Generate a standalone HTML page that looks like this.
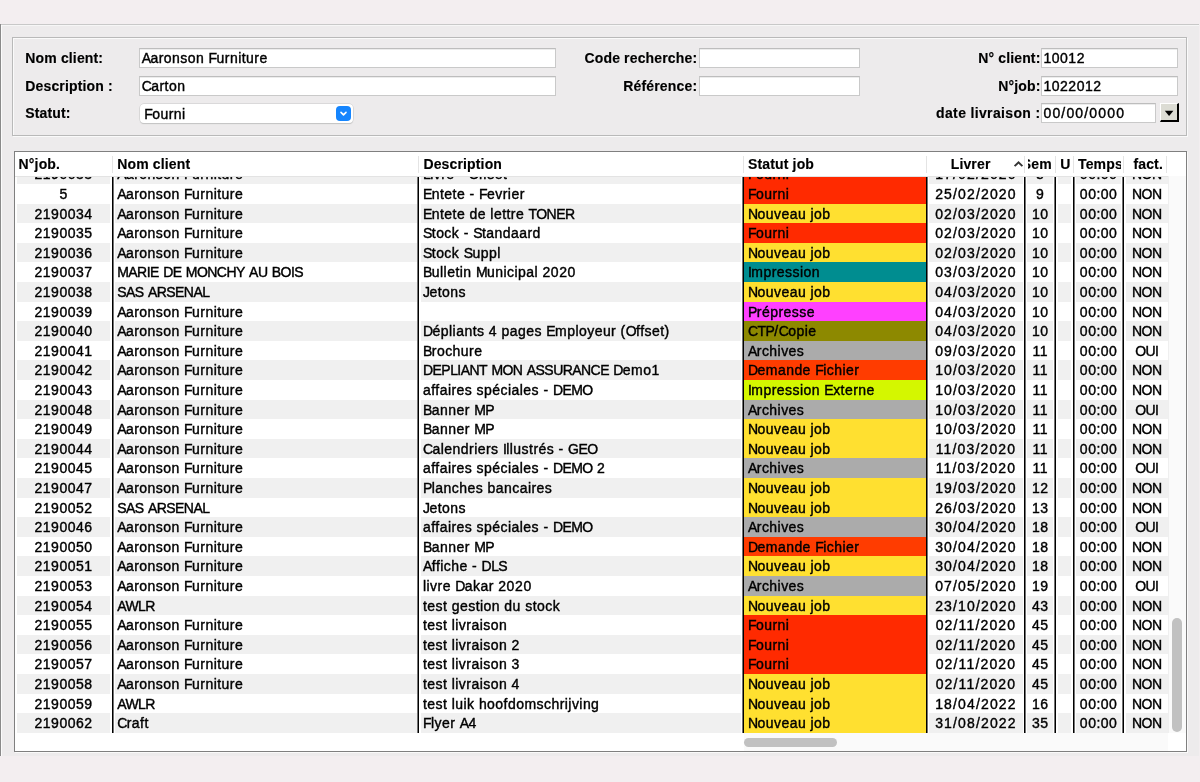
<!DOCTYPE html>
<html><head><meta charset="utf-8"><title>Jobs</title>
<style>
#wrap{position:absolute;left:0;top:0;width:1200px;height:782px;will-change:transform}
*{box-sizing:border-box}
html,body{margin:0;padding:0}
body{width:1200px;height:782px;background:#f3eef0;position:relative;overflow:hidden;font-family:"Liberation Sans",sans-serif;font-size:14px;color:#000}
.a{position:absolute}
.t{position:absolute;line-height:16px;white-space:nowrap;letter-spacing:0.3px;-webkit-text-stroke:0.4px #000}
.n{letter-spacing:0.5px}
.d{letter-spacing:1.15px}
.b{font-weight:bold;letter-spacing:0.15px;-webkit-text-stroke:0.15px #000}
.r{text-align:right}
.c{text-align:center}
.inp{position:absolute;background:#fff;border:1px solid #c9c9c9;border-top-color:#bdbdbd;box-shadow:inset 0 1px 0 #ececec}
.dv{position:absolute;width:1.5px;background:#111}
.hs{position:absolute;width:1px;background:#e4e4e4;top:156px;height:17px}
</style></head><body><div id="wrap">

<div class="a" style="left:0;top:24px;width:1199px;height:732px;background:#edebec"></div>
<div class="a" style="left:0;top:24px;width:1199px;height:1px;background:#c8c8c8"></div>
<div class="a" style="left:1px;top:25px;width:1198px;height:1px;background:#f6f6f6"></div>
<div class="a" style="left:0;top:24px;width:1px;height:732px;background:#8a8a8a"></div>
<div class="a" style="left:1px;top:25px;width:1px;height:731px;background:#fbfbfb"></div>
<div class="a" style="left:12px;top:37px;width:1175px;height:99px;border:1px solid #b9b9b9;box-shadow:inset 1px 1px 0 #fafafa, 1px 1px 0 #fafafa"></div>
<div class="t b" style="left:25.3px;top:50.15px;">Nom client:</div>
<div class="t b" style="left:25.3px;top:78.45px;">Description :</div>
<div class="t b" style="left:25.3px;top:105.15px;">Statut:</div>
<div class="t b r" style="right:502.8px;top:50.15px;">Code recherche:</div>
<div class="t b r" style="right:502.8px;top:78.45px;">Référence:</div>
<div class="t b r" style="right:159.5px;top:50.15px;">N° client:</div>
<div class="t b r" style="right:159.5px;top:78.45px;">N°job:</div>
<div class="t b r" style="right:159.5px;top:105.15px;letter-spacing:0.35px">date livraison :</div>
<div class="inp" style="left:139px;top:47.5px;width:417px;height:20px"></div>
<div class="inp" style="left:139px;top:75.5px;width:417px;height:20px"></div>
<div class="inp" style="left:699px;top:47.5px;width:161px;height:20px"></div>
<div class="inp" style="left:699px;top:75.5px;width:161px;height:20px"></div>
<div class="inp" style="left:1041px;top:47.5px;width:137px;height:20px"></div>
<div class="inp" style="left:1041px;top:75.5px;width:137px;height:20px"></div>
<div class="inp" style="left:1041px;top:102.5px;width:115px;height:20px"></div>
<div class="t " style="left:141.7px;top:49.95px;"><span style="letter-spacing:-0.55px">A</span><span style="letter-spacing:0.45px">aronson</span><span style="letter-spacing:0.45px"> </span><span style="letter-spacing:-0.55px">F</span><span style="letter-spacing:0.45px">urniture</span></div>
<div class="t " style="left:141.7px;top:78.15px;"><span style="letter-spacing:-0.55px">C</span><span style="letter-spacing:0.45px">arton</span></div>
<div class="t n" style="left:1043.5px;top:49.95px;">10012</div>
<div class="t n" style="left:1043.5px;top:78.15px;">1022012</div>
<div class="t d" style="left:1043.5px;top:105.15px;">00/00/0000</div>
<div class="a" style="left:140px;top:103.5px;width:212.5px;height:19.5px;background:#fff;border-radius:4px;box-shadow:0 0 0 0.5px #c8c8c8, 0 1px 1px #c0c0c0"></div>
<div class="a" style="left:336px;top:105.5px;width:15px;height:15px;background:#1585fe;border-radius:4px"></div>
<svg class="a" style="left:336px;top:105.5px" width="15" height="15" viewBox="0 0 15 15"><path d="M5 6.4 L7.5 8.9 L10 6.4" fill="none" stroke="#fff" stroke-width="1.6" stroke-linecap="round" stroke-linejoin="round"/></svg>
<div class="t " style="left:144.2px;top:106.15px;"><span style="letter-spacing:-0.55px">F</span><span style="letter-spacing:0.45px">ourni</span></div>
<div class="a" style="left:1160px;top:103px;width:19px;height:19px;background:#dcdcd4;border-top:1px solid #fff;border-left:1px solid #fff;border-right:2px solid #000;border-bottom:2px solid #000"></div>
<svg class="a" style="left:1160px;top:103px" width="19" height="19" viewBox="0 0 19 19"><path d="M4.8 7.8 L13.4 7.8 L9.1 13 Z" fill="#000"/></svg>
<div class="a" style="left:14px;top:151px;width:1173px;height:601px;background:#fff;border:1px solid #7f7f7f;box-shadow:1px 1px 0 #fafafa"></div>
<div class="a" style="left:15px;top:176px;width:1171px;height:556.8px;overflow:hidden">
<div class="a" style="left:2px;top:-11.6px;width:93px;height:19.6px;background:#f0f0f0"></div>
<div class="t c n" style="left:-51.45px;top:-9.55px;width:200px">2190033</div>
<div class="a" style="left:100px;top:-11.6px;width:301.5px;height:19.6px;background:#f0f0f0"></div>
<div class="t" style="left:102.2px;top:-9.55px"><span style="letter-spacing:-0.55px">A</span><span style="letter-spacing:0.45px">aronson</span><span style="letter-spacing:0.45px"> </span><span style="letter-spacing:-0.55px">F</span><span style="letter-spacing:0.45px">urniture</span></div>
<div class="a" style="left:406px;top:-11.6px;width:319.8px;height:19.6px;background:#f0f0f0"></div>
<div class="t" style="left:408px;top:-9.55px"><span style="letter-spacing:-0.55px">L</span><span style="letter-spacing:0.45px">ivre</span><span style="letter-spacing:0.45px"> </span><span style="letter-spacing:0.5px">-</span><span style="letter-spacing:0.45px"> </span><span style="letter-spacing:-0.55px">O</span><span style="letter-spacing:0.45px">ffset</span></div>
<div class="a" style="left:729.2px;top:-11.6px;width:181.8px;height:19.6px;background:#ff2a00"></div>
<div class="t" style="left:733px;top:-9.55px"><span style="letter-spacing:-0.55px">F</span><span style="letter-spacing:0.45px">ourni</span></div>
<div class="a" style="left:913.8px;top:-11.6px;width:93.8px;height:19.6px;background:#f0f0f0"></div>
<div class="t c d" style="left:860.95px;top:-9.55px;width:200px">17/02/2020</div>
<div class="a" style="left:1012.2px;top:-11.6px;width:25.7px;height:19.6px;background:#f0f0f0"></div>
<div class="t c n" style="left:925.25px;top:-9.55px;width:200px">8</div>
<div class="a" style="left:1042.9px;top:-11.6px;width:13.4px;height:19.6px;background:#f0f0f0"></div>
<div class="a" style="left:1061.3px;top:-11.6px;width:44.4px;height:19.6px;background:#f0f0f0"></div>
<div class="t c n" style="left:983.65px;top:-9.55px;width:200px">00:00</div>
<div class="a" style="left:1110.5px;top:-11.6px;width:42px;height:19.6px;background:#f0f0f0"></div>
<div class="t c" style="left:1031.75px;top:-9.55px;width:200px"><span style="letter-spacing:-0.55px">NON</span></div>
<div class="t c n" style="left:-51.45px;top:10.05px;width:200px">5</div>
<div class="t" style="left:102.2px;top:10.05px"><span style="letter-spacing:-0.55px">A</span><span style="letter-spacing:0.45px">aronson</span><span style="letter-spacing:0.45px"> </span><span style="letter-spacing:-0.55px">F</span><span style="letter-spacing:0.45px">urniture</span></div>
<div class="t" style="left:408px;top:10.05px"><span style="letter-spacing:-0.55px">E</span><span style="letter-spacing:0.45px">ntete</span><span style="letter-spacing:0.45px"> </span><span style="letter-spacing:0.5px">-</span><span style="letter-spacing:0.45px"> </span><span style="letter-spacing:-0.55px">F</span><span style="letter-spacing:0.45px">evrier</span></div>
<div class="a" style="left:729.2px;top:8px;width:181.8px;height:19.6px;background:#ff2a00"></div>
<div class="t" style="left:733px;top:10.05px"><span style="letter-spacing:-0.55px">F</span><span style="letter-spacing:0.45px">ourni</span></div>
<div class="t c d" style="left:860.95px;top:10.05px;width:200px">25/02/2020</div>
<div class="t c n" style="left:925.25px;top:10.05px;width:200px">9</div>
<div class="t c n" style="left:983.65px;top:10.05px;width:200px">00:00</div>
<div class="t c" style="left:1031.75px;top:10.05px;width:200px"><span style="letter-spacing:-0.55px">NON</span></div>
<div class="a" style="left:2px;top:27.6px;width:93px;height:19.6px;background:#f0f0f0"></div>
<div class="t c n" style="left:-51.45px;top:29.65px;width:200px">2190034</div>
<div class="a" style="left:100px;top:27.6px;width:301.5px;height:19.6px;background:#f0f0f0"></div>
<div class="t" style="left:102.2px;top:29.65px"><span style="letter-spacing:-0.55px">A</span><span style="letter-spacing:0.45px">aronson</span><span style="letter-spacing:0.45px"> </span><span style="letter-spacing:-0.55px">F</span><span style="letter-spacing:0.45px">urniture</span></div>
<div class="a" style="left:406px;top:27.6px;width:319.8px;height:19.6px;background:#f0f0f0"></div>
<div class="t" style="left:408px;top:29.65px"><span style="letter-spacing:-0.55px">E</span><span style="letter-spacing:0.45px">ntete</span><span style="letter-spacing:0.45px"> </span><span style="letter-spacing:0.45px">de</span><span style="letter-spacing:0.45px"> </span><span style="letter-spacing:0.45px">lettre</span><span style="letter-spacing:0.45px"> </span><span style="letter-spacing:-0.55px">TONER</span></div>
<div class="a" style="left:729.2px;top:27.6px;width:181.8px;height:19.6px;background:#ffe030"></div>
<div class="t" style="left:733px;top:29.65px"><span style="letter-spacing:-0.55px">N</span><span style="letter-spacing:0.45px">ouveau</span><span style="letter-spacing:0.45px"> </span><span style="letter-spacing:0.45px">job</span></div>
<div class="a" style="left:913.8px;top:27.6px;width:93.8px;height:19.6px;background:#f0f0f0"></div>
<div class="t c d" style="left:860.95px;top:29.65px;width:200px">02/03/2020</div>
<div class="a" style="left:1012.2px;top:27.6px;width:25.7px;height:19.6px;background:#f0f0f0"></div>
<div class="t c n" style="left:925.25px;top:29.65px;width:200px">10</div>
<div class="a" style="left:1042.9px;top:27.6px;width:13.4px;height:19.6px;background:#f0f0f0"></div>
<div class="a" style="left:1061.3px;top:27.6px;width:44.4px;height:19.6px;background:#f0f0f0"></div>
<div class="t c n" style="left:983.65px;top:29.65px;width:200px">00:00</div>
<div class="a" style="left:1110.5px;top:27.6px;width:42px;height:19.6px;background:#f0f0f0"></div>
<div class="t c" style="left:1031.75px;top:29.65px;width:200px"><span style="letter-spacing:-0.55px">NON</span></div>
<div class="t c n" style="left:-51.45px;top:49.25px;width:200px">2190035</div>
<div class="t" style="left:102.2px;top:49.25px"><span style="letter-spacing:-0.55px">A</span><span style="letter-spacing:0.45px">aronson</span><span style="letter-spacing:0.45px"> </span><span style="letter-spacing:-0.55px">F</span><span style="letter-spacing:0.45px">urniture</span></div>
<div class="t" style="left:408px;top:49.25px"><span style="letter-spacing:-0.55px">S</span><span style="letter-spacing:0.45px">tock</span><span style="letter-spacing:0.45px"> </span><span style="letter-spacing:0.5px">-</span><span style="letter-spacing:0.45px"> </span><span style="letter-spacing:-0.55px">S</span><span style="letter-spacing:0.45px">tandaard</span></div>
<div class="a" style="left:729.2px;top:47.2px;width:181.8px;height:19.6px;background:#ff2a00"></div>
<div class="t" style="left:733px;top:49.25px"><span style="letter-spacing:-0.55px">F</span><span style="letter-spacing:0.45px">ourni</span></div>
<div class="t c d" style="left:860.95px;top:49.25px;width:200px">02/03/2020</div>
<div class="t c n" style="left:925.25px;top:49.25px;width:200px">10</div>
<div class="t c n" style="left:983.65px;top:49.25px;width:200px">00:00</div>
<div class="t c" style="left:1031.75px;top:49.25px;width:200px"><span style="letter-spacing:-0.55px">NON</span></div>
<div class="a" style="left:2px;top:66.8px;width:93px;height:19.6px;background:#f0f0f0"></div>
<div class="t c n" style="left:-51.45px;top:68.85px;width:200px">2190036</div>
<div class="a" style="left:100px;top:66.8px;width:301.5px;height:19.6px;background:#f0f0f0"></div>
<div class="t" style="left:102.2px;top:68.85px"><span style="letter-spacing:-0.55px">A</span><span style="letter-spacing:0.45px">aronson</span><span style="letter-spacing:0.45px"> </span><span style="letter-spacing:-0.55px">F</span><span style="letter-spacing:0.45px">urniture</span></div>
<div class="a" style="left:406px;top:66.8px;width:319.8px;height:19.6px;background:#f0f0f0"></div>
<div class="t" style="left:408px;top:68.85px"><span style="letter-spacing:-0.55px">S</span><span style="letter-spacing:0.45px">tock</span><span style="letter-spacing:0.45px"> </span><span style="letter-spacing:-0.55px">S</span><span style="letter-spacing:0.45px">uppl</span></div>
<div class="a" style="left:729.2px;top:66.8px;width:181.8px;height:19.6px;background:#ffe030"></div>
<div class="t" style="left:733px;top:68.85px"><span style="letter-spacing:-0.55px">N</span><span style="letter-spacing:0.45px">ouveau</span><span style="letter-spacing:0.45px"> </span><span style="letter-spacing:0.45px">job</span></div>
<div class="a" style="left:913.8px;top:66.8px;width:93.8px;height:19.6px;background:#f0f0f0"></div>
<div class="t c d" style="left:860.95px;top:68.85px;width:200px">02/03/2020</div>
<div class="a" style="left:1012.2px;top:66.8px;width:25.7px;height:19.6px;background:#f0f0f0"></div>
<div class="t c n" style="left:925.25px;top:68.85px;width:200px">10</div>
<div class="a" style="left:1042.9px;top:66.8px;width:13.4px;height:19.6px;background:#f0f0f0"></div>
<div class="a" style="left:1061.3px;top:66.8px;width:44.4px;height:19.6px;background:#f0f0f0"></div>
<div class="t c n" style="left:983.65px;top:68.85px;width:200px">00:00</div>
<div class="a" style="left:1110.5px;top:66.8px;width:42px;height:19.6px;background:#f0f0f0"></div>
<div class="t c" style="left:1031.75px;top:68.85px;width:200px"><span style="letter-spacing:-0.55px">NON</span></div>
<div class="t c n" style="left:-51.45px;top:88.45px;width:200px">2190037</div>
<div class="t" style="left:102.2px;top:88.45px"><span style="letter-spacing:-0.55px">MARIE</span><span style="letter-spacing:0.45px"> </span><span style="letter-spacing:-0.55px">DE</span><span style="letter-spacing:0.45px"> </span><span style="letter-spacing:-0.55px">MONCHY</span><span style="letter-spacing:0.45px"> </span><span style="letter-spacing:-0.55px">AU</span><span style="letter-spacing:0.45px"> </span><span style="letter-spacing:-0.55px">BOIS</span></div>
<div class="t" style="left:408px;top:88.45px"><span style="letter-spacing:-0.55px">B</span><span style="letter-spacing:0.45px">ulletin</span><span style="letter-spacing:0.45px"> </span><span style="letter-spacing:-0.55px">M</span><span style="letter-spacing:0.45px">unicipal</span><span style="letter-spacing:0.45px"> </span><span style="letter-spacing:0.6px">2020</span></div>
<div class="a" style="left:729.2px;top:86.4px;width:181.8px;height:19.6px;background:#008d90"></div>
<div class="t" style="left:733px;top:88.45px"><span style="letter-spacing:-0.55px">I</span><span style="letter-spacing:0.45px">mpression</span></div>
<div class="t c d" style="left:860.95px;top:88.45px;width:200px">03/03/2020</div>
<div class="t c n" style="left:925.25px;top:88.45px;width:200px">10</div>
<div class="t c n" style="left:983.65px;top:88.45px;width:200px">00:00</div>
<div class="t c" style="left:1031.75px;top:88.45px;width:200px"><span style="letter-spacing:-0.55px">NON</span></div>
<div class="a" style="left:2px;top:106px;width:93px;height:19.6px;background:#f0f0f0"></div>
<div class="t c n" style="left:-51.45px;top:108.05px;width:200px">2190038</div>
<div class="a" style="left:100px;top:106px;width:301.5px;height:19.6px;background:#f0f0f0"></div>
<div class="t" style="left:102.2px;top:108.05px"><span style="letter-spacing:-0.55px">SAS</span><span style="letter-spacing:0.45px"> </span><span style="letter-spacing:-0.55px">ARSENAL</span></div>
<div class="a" style="left:406px;top:106px;width:319.8px;height:19.6px;background:#f0f0f0"></div>
<div class="t" style="left:408px;top:108.05px"><span style="letter-spacing:-0.55px">J</span><span style="letter-spacing:0.45px">etons</span></div>
<div class="a" style="left:729.2px;top:106px;width:181.8px;height:19.6px;background:#ffe030"></div>
<div class="t" style="left:733px;top:108.05px"><span style="letter-spacing:-0.55px">N</span><span style="letter-spacing:0.45px">ouveau</span><span style="letter-spacing:0.45px"> </span><span style="letter-spacing:0.45px">job</span></div>
<div class="a" style="left:913.8px;top:106px;width:93.8px;height:19.6px;background:#f0f0f0"></div>
<div class="t c d" style="left:860.95px;top:108.05px;width:200px">04/03/2020</div>
<div class="a" style="left:1012.2px;top:106px;width:25.7px;height:19.6px;background:#f0f0f0"></div>
<div class="t c n" style="left:925.25px;top:108.05px;width:200px">10</div>
<div class="a" style="left:1042.9px;top:106px;width:13.4px;height:19.6px;background:#f0f0f0"></div>
<div class="a" style="left:1061.3px;top:106px;width:44.4px;height:19.6px;background:#f0f0f0"></div>
<div class="t c n" style="left:983.65px;top:108.05px;width:200px">00:00</div>
<div class="a" style="left:1110.5px;top:106px;width:42px;height:19.6px;background:#f0f0f0"></div>
<div class="t c" style="left:1031.75px;top:108.05px;width:200px"><span style="letter-spacing:-0.55px">NON</span></div>
<div class="t c n" style="left:-51.45px;top:127.65px;width:200px">2190039</div>
<div class="t" style="left:102.2px;top:127.65px"><span style="letter-spacing:-0.55px">A</span><span style="letter-spacing:0.45px">aronson</span><span style="letter-spacing:0.45px"> </span><span style="letter-spacing:-0.55px">F</span><span style="letter-spacing:0.45px">urniture</span></div>
<div class="a" style="left:729.2px;top:125.6px;width:181.8px;height:19.6px;background:#ff40ff"></div>
<div class="t" style="left:733px;top:127.65px"><span style="letter-spacing:-0.55px">P</span><span style="letter-spacing:0.45px">répresse</span></div>
<div class="t c d" style="left:860.95px;top:127.65px;width:200px">04/03/2020</div>
<div class="t c n" style="left:925.25px;top:127.65px;width:200px">10</div>
<div class="t c n" style="left:983.65px;top:127.65px;width:200px">00:00</div>
<div class="t c" style="left:1031.75px;top:127.65px;width:200px"><span style="letter-spacing:-0.55px">NON</span></div>
<div class="a" style="left:2px;top:145.2px;width:93px;height:19.6px;background:#f0f0f0"></div>
<div class="t c n" style="left:-51.45px;top:147.25px;width:200px">2190040</div>
<div class="a" style="left:100px;top:145.2px;width:301.5px;height:19.6px;background:#f0f0f0"></div>
<div class="t" style="left:102.2px;top:147.25px"><span style="letter-spacing:-0.55px">A</span><span style="letter-spacing:0.45px">aronson</span><span style="letter-spacing:0.45px"> </span><span style="letter-spacing:-0.55px">F</span><span style="letter-spacing:0.45px">urniture</span></div>
<div class="a" style="left:406px;top:145.2px;width:319.8px;height:19.6px;background:#f0f0f0"></div>
<div class="t" style="left:408px;top:147.25px"><span style="letter-spacing:-0.55px">D</span><span style="letter-spacing:0.45px">épliants</span><span style="letter-spacing:0.45px"> </span><span style="letter-spacing:0.6px">4</span><span style="letter-spacing:0.45px"> </span><span style="letter-spacing:0.45px">pages</span><span style="letter-spacing:0.45px"> </span><span style="letter-spacing:-0.55px">E</span><span style="letter-spacing:0.45px">mployeur</span><span style="letter-spacing:0.45px"> </span><span style="letter-spacing:0.5px">(</span><span style="letter-spacing:-0.55px">O</span><span style="letter-spacing:0.45px">ffset</span><span style="letter-spacing:0.5px">)</span></div>
<div class="a" style="left:729.2px;top:145.2px;width:181.8px;height:19.6px;background:#8d8900"></div>
<div class="t" style="left:733px;top:147.25px"><span style="letter-spacing:-0.55px">CTP</span><span style="letter-spacing:0.5px">/</span><span style="letter-spacing:-0.55px">C</span><span style="letter-spacing:0.45px">opie</span></div>
<div class="a" style="left:913.8px;top:145.2px;width:93.8px;height:19.6px;background:#f0f0f0"></div>
<div class="t c d" style="left:860.95px;top:147.25px;width:200px">04/03/2020</div>
<div class="a" style="left:1012.2px;top:145.2px;width:25.7px;height:19.6px;background:#f0f0f0"></div>
<div class="t c n" style="left:925.25px;top:147.25px;width:200px">10</div>
<div class="a" style="left:1042.9px;top:145.2px;width:13.4px;height:19.6px;background:#f0f0f0"></div>
<div class="a" style="left:1061.3px;top:145.2px;width:44.4px;height:19.6px;background:#f0f0f0"></div>
<div class="t c n" style="left:983.65px;top:147.25px;width:200px">00:00</div>
<div class="a" style="left:1110.5px;top:145.2px;width:42px;height:19.6px;background:#f0f0f0"></div>
<div class="t c" style="left:1031.75px;top:147.25px;width:200px"><span style="letter-spacing:-0.55px">NON</span></div>
<div class="t c n" style="left:-51.45px;top:166.85px;width:200px">2190041</div>
<div class="t" style="left:102.2px;top:166.85px"><span style="letter-spacing:-0.55px">A</span><span style="letter-spacing:0.45px">aronson</span><span style="letter-spacing:0.45px"> </span><span style="letter-spacing:-0.55px">F</span><span style="letter-spacing:0.45px">urniture</span></div>
<div class="t" style="left:408px;top:166.85px"><span style="letter-spacing:-0.55px">B</span><span style="letter-spacing:0.45px">rochure</span></div>
<div class="a" style="left:729.2px;top:164.8px;width:181.8px;height:19.6px;background:#ababab"></div>
<div class="t" style="left:733px;top:166.85px"><span style="letter-spacing:-0.55px">A</span><span style="letter-spacing:0.45px">rchives</span></div>
<div class="t c d" style="left:860.95px;top:166.85px;width:200px">09/03/2020</div>
<div class="t c n" style="left:925.25px;top:166.85px;width:200px">11</div>
<div class="t c n" style="left:983.65px;top:166.85px;width:200px">00:00</div>
<div class="t c" style="left:1031.75px;top:166.85px;width:200px"><span style="letter-spacing:-0.55px">OUI</span></div>
<div class="a" style="left:2px;top:184.4px;width:93px;height:19.6px;background:#f0f0f0"></div>
<div class="t c n" style="left:-51.45px;top:186.45px;width:200px">2190042</div>
<div class="a" style="left:100px;top:184.4px;width:301.5px;height:19.6px;background:#f0f0f0"></div>
<div class="t" style="left:102.2px;top:186.45px"><span style="letter-spacing:-0.55px">A</span><span style="letter-spacing:0.45px">aronson</span><span style="letter-spacing:0.45px"> </span><span style="letter-spacing:-0.55px">F</span><span style="letter-spacing:0.45px">urniture</span></div>
<div class="a" style="left:406px;top:184.4px;width:319.8px;height:19.6px;background:#f0f0f0"></div>
<div class="t" style="left:408px;top:186.45px"><span style="letter-spacing:-0.55px">DEPLIANT</span><span style="letter-spacing:0.45px"> </span><span style="letter-spacing:-0.55px">MON</span><span style="letter-spacing:0.45px"> </span><span style="letter-spacing:-0.55px">ASSURANCE</span><span style="letter-spacing:0.45px"> </span><span style="letter-spacing:-0.55px">D</span><span style="letter-spacing:0.45px">emo</span><span style="letter-spacing:0.6px">1</span></div>
<div class="a" style="left:729.2px;top:184.4px;width:181.8px;height:19.6px;background:#ff3c00"></div>
<div class="t" style="left:733px;top:186.45px"><span style="letter-spacing:-0.55px">D</span><span style="letter-spacing:0.45px">emande</span><span style="letter-spacing:0.45px"> </span><span style="letter-spacing:-0.55px">F</span><span style="letter-spacing:0.45px">ichier</span></div>
<div class="a" style="left:913.8px;top:184.4px;width:93.8px;height:19.6px;background:#f0f0f0"></div>
<div class="t c d" style="left:860.95px;top:186.45px;width:200px">10/03/2020</div>
<div class="a" style="left:1012.2px;top:184.4px;width:25.7px;height:19.6px;background:#f0f0f0"></div>
<div class="t c n" style="left:925.25px;top:186.45px;width:200px">11</div>
<div class="a" style="left:1042.9px;top:184.4px;width:13.4px;height:19.6px;background:#f0f0f0"></div>
<div class="a" style="left:1061.3px;top:184.4px;width:44.4px;height:19.6px;background:#f0f0f0"></div>
<div class="t c n" style="left:983.65px;top:186.45px;width:200px">00:00</div>
<div class="a" style="left:1110.5px;top:184.4px;width:42px;height:19.6px;background:#f0f0f0"></div>
<div class="t c" style="left:1031.75px;top:186.45px;width:200px"><span style="letter-spacing:-0.55px">NON</span></div>
<div class="t c n" style="left:-51.45px;top:206.05px;width:200px">2190043</div>
<div class="t" style="left:102.2px;top:206.05px"><span style="letter-spacing:-0.55px">A</span><span style="letter-spacing:0.45px">aronson</span><span style="letter-spacing:0.45px"> </span><span style="letter-spacing:-0.55px">F</span><span style="letter-spacing:0.45px">urniture</span></div>
<div class="t" style="left:408px;top:206.05px"><span style="letter-spacing:0.45px">affaires</span><span style="letter-spacing:0.45px"> </span><span style="letter-spacing:0.45px">spéciales</span><span style="letter-spacing:0.45px"> </span><span style="letter-spacing:0.5px">-</span><span style="letter-spacing:0.45px"> </span><span style="letter-spacing:-0.55px">DEMO</span></div>
<div class="a" style="left:729.2px;top:204px;width:181.8px;height:19.6px;background:#d4f700"></div>
<div class="t" style="left:733px;top:206.05px"><span style="letter-spacing:-0.55px">I</span><span style="letter-spacing:0.45px">mpression</span><span style="letter-spacing:0.45px"> </span><span style="letter-spacing:-0.55px">E</span><span style="letter-spacing:0.45px">xterne</span></div>
<div class="t c d" style="left:860.95px;top:206.05px;width:200px">10/03/2020</div>
<div class="t c n" style="left:925.25px;top:206.05px;width:200px">11</div>
<div class="t c n" style="left:983.65px;top:206.05px;width:200px">00:00</div>
<div class="t c" style="left:1031.75px;top:206.05px;width:200px"><span style="letter-spacing:-0.55px">NON</span></div>
<div class="a" style="left:2px;top:223.6px;width:93px;height:19.6px;background:#f0f0f0"></div>
<div class="t c n" style="left:-51.45px;top:225.65px;width:200px">2190048</div>
<div class="a" style="left:100px;top:223.6px;width:301.5px;height:19.6px;background:#f0f0f0"></div>
<div class="t" style="left:102.2px;top:225.65px"><span style="letter-spacing:-0.55px">A</span><span style="letter-spacing:0.45px">aronson</span><span style="letter-spacing:0.45px"> </span><span style="letter-spacing:-0.55px">F</span><span style="letter-spacing:0.45px">urniture</span></div>
<div class="a" style="left:406px;top:223.6px;width:319.8px;height:19.6px;background:#f0f0f0"></div>
<div class="t" style="left:408px;top:225.65px"><span style="letter-spacing:-0.55px">B</span><span style="letter-spacing:0.45px">anner</span><span style="letter-spacing:0.45px"> </span><span style="letter-spacing:-0.55px">MP</span></div>
<div class="a" style="left:729.2px;top:223.6px;width:181.8px;height:19.6px;background:#ababab"></div>
<div class="t" style="left:733px;top:225.65px"><span style="letter-spacing:-0.55px">A</span><span style="letter-spacing:0.45px">rchives</span></div>
<div class="a" style="left:913.8px;top:223.6px;width:93.8px;height:19.6px;background:#f0f0f0"></div>
<div class="t c d" style="left:860.95px;top:225.65px;width:200px">10/03/2020</div>
<div class="a" style="left:1012.2px;top:223.6px;width:25.7px;height:19.6px;background:#f0f0f0"></div>
<div class="t c n" style="left:925.25px;top:225.65px;width:200px">11</div>
<div class="a" style="left:1042.9px;top:223.6px;width:13.4px;height:19.6px;background:#f0f0f0"></div>
<div class="a" style="left:1061.3px;top:223.6px;width:44.4px;height:19.6px;background:#f0f0f0"></div>
<div class="t c n" style="left:983.65px;top:225.65px;width:200px">00:00</div>
<div class="a" style="left:1110.5px;top:223.6px;width:42px;height:19.6px;background:#f0f0f0"></div>
<div class="t c" style="left:1031.75px;top:225.65px;width:200px"><span style="letter-spacing:-0.55px">OUI</span></div>
<div class="t c n" style="left:-51.45px;top:245.25px;width:200px">2190049</div>
<div class="t" style="left:102.2px;top:245.25px"><span style="letter-spacing:-0.55px">A</span><span style="letter-spacing:0.45px">aronson</span><span style="letter-spacing:0.45px"> </span><span style="letter-spacing:-0.55px">F</span><span style="letter-spacing:0.45px">urniture</span></div>
<div class="t" style="left:408px;top:245.25px"><span style="letter-spacing:-0.55px">B</span><span style="letter-spacing:0.45px">anner</span><span style="letter-spacing:0.45px"> </span><span style="letter-spacing:-0.55px">MP</span></div>
<div class="a" style="left:729.2px;top:243.2px;width:181.8px;height:19.6px;background:#ffe030"></div>
<div class="t" style="left:733px;top:245.25px"><span style="letter-spacing:-0.55px">N</span><span style="letter-spacing:0.45px">ouveau</span><span style="letter-spacing:0.45px"> </span><span style="letter-spacing:0.45px">job</span></div>
<div class="t c d" style="left:860.95px;top:245.25px;width:200px">10/03/2020</div>
<div class="t c n" style="left:925.25px;top:245.25px;width:200px">11</div>
<div class="t c n" style="left:983.65px;top:245.25px;width:200px">00:00</div>
<div class="t c" style="left:1031.75px;top:245.25px;width:200px"><span style="letter-spacing:-0.55px">NON</span></div>
<div class="a" style="left:2px;top:262.8px;width:93px;height:19.6px;background:#f0f0f0"></div>
<div class="t c n" style="left:-51.45px;top:264.85px;width:200px">2190044</div>
<div class="a" style="left:100px;top:262.8px;width:301.5px;height:19.6px;background:#f0f0f0"></div>
<div class="t" style="left:102.2px;top:264.85px"><span style="letter-spacing:-0.55px">A</span><span style="letter-spacing:0.45px">aronson</span><span style="letter-spacing:0.45px"> </span><span style="letter-spacing:-0.55px">F</span><span style="letter-spacing:0.45px">urniture</span></div>
<div class="a" style="left:406px;top:262.8px;width:319.8px;height:19.6px;background:#f0f0f0"></div>
<div class="t" style="left:408px;top:264.85px"><span style="letter-spacing:-0.55px">C</span><span style="letter-spacing:0.45px">alendriers</span><span style="letter-spacing:0.45px"> </span><span style="letter-spacing:-0.55px">I</span><span style="letter-spacing:0.45px">llustrés</span><span style="letter-spacing:0.45px"> </span><span style="letter-spacing:0.5px">-</span><span style="letter-spacing:0.45px"> </span><span style="letter-spacing:-0.55px">GEO</span></div>
<div class="a" style="left:729.2px;top:262.8px;width:181.8px;height:19.6px;background:#ffe030"></div>
<div class="t" style="left:733px;top:264.85px"><span style="letter-spacing:-0.55px">N</span><span style="letter-spacing:0.45px">ouveau</span><span style="letter-spacing:0.45px"> </span><span style="letter-spacing:0.45px">job</span></div>
<div class="a" style="left:913.8px;top:262.8px;width:93.8px;height:19.6px;background:#f0f0f0"></div>
<div class="t c d" style="left:860.95px;top:264.85px;width:200px">11/03/2020</div>
<div class="a" style="left:1012.2px;top:262.8px;width:25.7px;height:19.6px;background:#f0f0f0"></div>
<div class="t c n" style="left:925.25px;top:264.85px;width:200px">11</div>
<div class="a" style="left:1042.9px;top:262.8px;width:13.4px;height:19.6px;background:#f0f0f0"></div>
<div class="a" style="left:1061.3px;top:262.8px;width:44.4px;height:19.6px;background:#f0f0f0"></div>
<div class="t c n" style="left:983.65px;top:264.85px;width:200px">00:00</div>
<div class="a" style="left:1110.5px;top:262.8px;width:42px;height:19.6px;background:#f0f0f0"></div>
<div class="t c" style="left:1031.75px;top:264.85px;width:200px"><span style="letter-spacing:-0.55px">NON</span></div>
<div class="t c n" style="left:-51.45px;top:284.45px;width:200px">2190045</div>
<div class="t" style="left:102.2px;top:284.45px"><span style="letter-spacing:-0.55px">A</span><span style="letter-spacing:0.45px">aronson</span><span style="letter-spacing:0.45px"> </span><span style="letter-spacing:-0.55px">F</span><span style="letter-spacing:0.45px">urniture</span></div>
<div class="t" style="left:408px;top:284.45px"><span style="letter-spacing:0.45px">affaires</span><span style="letter-spacing:0.45px"> </span><span style="letter-spacing:0.45px">spéciales</span><span style="letter-spacing:0.45px"> </span><span style="letter-spacing:0.5px">-</span><span style="letter-spacing:0.45px"> </span><span style="letter-spacing:-0.55px">DEMO</span><span style="letter-spacing:0.45px"> </span><span style="letter-spacing:0.6px">2</span></div>
<div class="a" style="left:729.2px;top:282.4px;width:181.8px;height:19.6px;background:#ababab"></div>
<div class="t" style="left:733px;top:284.45px"><span style="letter-spacing:-0.55px">A</span><span style="letter-spacing:0.45px">rchives</span></div>
<div class="t c d" style="left:860.95px;top:284.45px;width:200px">11/03/2020</div>
<div class="t c n" style="left:925.25px;top:284.45px;width:200px">11</div>
<div class="t c n" style="left:983.65px;top:284.45px;width:200px">00:00</div>
<div class="t c" style="left:1031.75px;top:284.45px;width:200px"><span style="letter-spacing:-0.55px">OUI</span></div>
<div class="a" style="left:2px;top:302px;width:93px;height:19.6px;background:#f0f0f0"></div>
<div class="t c n" style="left:-51.45px;top:304.05px;width:200px">2190047</div>
<div class="a" style="left:100px;top:302px;width:301.5px;height:19.6px;background:#f0f0f0"></div>
<div class="t" style="left:102.2px;top:304.05px"><span style="letter-spacing:-0.55px">A</span><span style="letter-spacing:0.45px">aronson</span><span style="letter-spacing:0.45px"> </span><span style="letter-spacing:-0.55px">F</span><span style="letter-spacing:0.45px">urniture</span></div>
<div class="a" style="left:406px;top:302px;width:319.8px;height:19.6px;background:#f0f0f0"></div>
<div class="t" style="left:408px;top:304.05px"><span style="letter-spacing:-0.55px">P</span><span style="letter-spacing:0.45px">lanches</span><span style="letter-spacing:0.45px"> </span><span style="letter-spacing:0.45px">bancaires</span></div>
<div class="a" style="left:729.2px;top:302px;width:181.8px;height:19.6px;background:#ffe030"></div>
<div class="t" style="left:733px;top:304.05px"><span style="letter-spacing:-0.55px">N</span><span style="letter-spacing:0.45px">ouveau</span><span style="letter-spacing:0.45px"> </span><span style="letter-spacing:0.45px">job</span></div>
<div class="a" style="left:913.8px;top:302px;width:93.8px;height:19.6px;background:#f0f0f0"></div>
<div class="t c d" style="left:860.95px;top:304.05px;width:200px">19/03/2020</div>
<div class="a" style="left:1012.2px;top:302px;width:25.7px;height:19.6px;background:#f0f0f0"></div>
<div class="t c n" style="left:925.25px;top:304.05px;width:200px">12</div>
<div class="a" style="left:1042.9px;top:302px;width:13.4px;height:19.6px;background:#f0f0f0"></div>
<div class="a" style="left:1061.3px;top:302px;width:44.4px;height:19.6px;background:#f0f0f0"></div>
<div class="t c n" style="left:983.65px;top:304.05px;width:200px">00:00</div>
<div class="a" style="left:1110.5px;top:302px;width:42px;height:19.6px;background:#f0f0f0"></div>
<div class="t c" style="left:1031.75px;top:304.05px;width:200px"><span style="letter-spacing:-0.55px">NON</span></div>
<div class="t c n" style="left:-51.45px;top:323.65px;width:200px">2190052</div>
<div class="t" style="left:102.2px;top:323.65px"><span style="letter-spacing:-0.55px">SAS</span><span style="letter-spacing:0.45px"> </span><span style="letter-spacing:-0.55px">ARSENAL</span></div>
<div class="t" style="left:408px;top:323.65px"><span style="letter-spacing:-0.55px">J</span><span style="letter-spacing:0.45px">etons</span></div>
<div class="a" style="left:729.2px;top:321.6px;width:181.8px;height:19.6px;background:#ffe030"></div>
<div class="t" style="left:733px;top:323.65px"><span style="letter-spacing:-0.55px">N</span><span style="letter-spacing:0.45px">ouveau</span><span style="letter-spacing:0.45px"> </span><span style="letter-spacing:0.45px">job</span></div>
<div class="t c d" style="left:860.95px;top:323.65px;width:200px">26/03/2020</div>
<div class="t c n" style="left:925.25px;top:323.65px;width:200px">13</div>
<div class="t c n" style="left:983.65px;top:323.65px;width:200px">00:00</div>
<div class="t c" style="left:1031.75px;top:323.65px;width:200px"><span style="letter-spacing:-0.55px">NON</span></div>
<div class="a" style="left:2px;top:341.2px;width:93px;height:19.6px;background:#f0f0f0"></div>
<div class="t c n" style="left:-51.45px;top:343.25px;width:200px">2190046</div>
<div class="a" style="left:100px;top:341.2px;width:301.5px;height:19.6px;background:#f0f0f0"></div>
<div class="t" style="left:102.2px;top:343.25px"><span style="letter-spacing:-0.55px">A</span><span style="letter-spacing:0.45px">aronson</span><span style="letter-spacing:0.45px"> </span><span style="letter-spacing:-0.55px">F</span><span style="letter-spacing:0.45px">urniture</span></div>
<div class="a" style="left:406px;top:341.2px;width:319.8px;height:19.6px;background:#f0f0f0"></div>
<div class="t" style="left:408px;top:343.25px"><span style="letter-spacing:0.45px">affaires</span><span style="letter-spacing:0.45px"> </span><span style="letter-spacing:0.45px">spéciales</span><span style="letter-spacing:0.45px"> </span><span style="letter-spacing:0.5px">-</span><span style="letter-spacing:0.45px"> </span><span style="letter-spacing:-0.55px">DEMO</span></div>
<div class="a" style="left:729.2px;top:341.2px;width:181.8px;height:19.6px;background:#ababab"></div>
<div class="t" style="left:733px;top:343.25px"><span style="letter-spacing:-0.55px">A</span><span style="letter-spacing:0.45px">rchives</span></div>
<div class="a" style="left:913.8px;top:341.2px;width:93.8px;height:19.6px;background:#f0f0f0"></div>
<div class="t c d" style="left:860.95px;top:343.25px;width:200px">30/04/2020</div>
<div class="a" style="left:1012.2px;top:341.2px;width:25.7px;height:19.6px;background:#f0f0f0"></div>
<div class="t c n" style="left:925.25px;top:343.25px;width:200px">18</div>
<div class="a" style="left:1042.9px;top:341.2px;width:13.4px;height:19.6px;background:#f0f0f0"></div>
<div class="a" style="left:1061.3px;top:341.2px;width:44.4px;height:19.6px;background:#f0f0f0"></div>
<div class="t c n" style="left:983.65px;top:343.25px;width:200px">00:00</div>
<div class="a" style="left:1110.5px;top:341.2px;width:42px;height:19.6px;background:#f0f0f0"></div>
<div class="t c" style="left:1031.75px;top:343.25px;width:200px"><span style="letter-spacing:-0.55px">OUI</span></div>
<div class="t c n" style="left:-51.45px;top:362.85px;width:200px">2190050</div>
<div class="t" style="left:102.2px;top:362.85px"><span style="letter-spacing:-0.55px">A</span><span style="letter-spacing:0.45px">aronson</span><span style="letter-spacing:0.45px"> </span><span style="letter-spacing:-0.55px">F</span><span style="letter-spacing:0.45px">urniture</span></div>
<div class="t" style="left:408px;top:362.85px"><span style="letter-spacing:-0.55px">B</span><span style="letter-spacing:0.45px">anner</span><span style="letter-spacing:0.45px"> </span><span style="letter-spacing:-0.55px">MP</span></div>
<div class="a" style="left:729.2px;top:360.8px;width:181.8px;height:19.6px;background:#ff3c00"></div>
<div class="t" style="left:733px;top:362.85px"><span style="letter-spacing:-0.55px">D</span><span style="letter-spacing:0.45px">emande</span><span style="letter-spacing:0.45px"> </span><span style="letter-spacing:-0.55px">F</span><span style="letter-spacing:0.45px">ichier</span></div>
<div class="t c d" style="left:860.95px;top:362.85px;width:200px">30/04/2020</div>
<div class="t c n" style="left:925.25px;top:362.85px;width:200px">18</div>
<div class="t c n" style="left:983.65px;top:362.85px;width:200px">00:00</div>
<div class="t c" style="left:1031.75px;top:362.85px;width:200px"><span style="letter-spacing:-0.55px">NON</span></div>
<div class="a" style="left:2px;top:380.4px;width:93px;height:19.6px;background:#f0f0f0"></div>
<div class="t c n" style="left:-51.45px;top:382.45px;width:200px">2190051</div>
<div class="a" style="left:100px;top:380.4px;width:301.5px;height:19.6px;background:#f0f0f0"></div>
<div class="t" style="left:102.2px;top:382.45px"><span style="letter-spacing:-0.55px">A</span><span style="letter-spacing:0.45px">aronson</span><span style="letter-spacing:0.45px"> </span><span style="letter-spacing:-0.55px">F</span><span style="letter-spacing:0.45px">urniture</span></div>
<div class="a" style="left:406px;top:380.4px;width:319.8px;height:19.6px;background:#f0f0f0"></div>
<div class="t" style="left:408px;top:382.45px"><span style="letter-spacing:-0.55px">A</span><span style="letter-spacing:0.45px">ffiche</span><span style="letter-spacing:0.45px"> </span><span style="letter-spacing:0.5px">-</span><span style="letter-spacing:0.45px"> </span><span style="letter-spacing:-0.55px">DLS</span></div>
<div class="a" style="left:729.2px;top:380.4px;width:181.8px;height:19.6px;background:#ffe030"></div>
<div class="t" style="left:733px;top:382.45px"><span style="letter-spacing:-0.55px">N</span><span style="letter-spacing:0.45px">ouveau</span><span style="letter-spacing:0.45px"> </span><span style="letter-spacing:0.45px">job</span></div>
<div class="a" style="left:913.8px;top:380.4px;width:93.8px;height:19.6px;background:#f0f0f0"></div>
<div class="t c d" style="left:860.95px;top:382.45px;width:200px">30/04/2020</div>
<div class="a" style="left:1012.2px;top:380.4px;width:25.7px;height:19.6px;background:#f0f0f0"></div>
<div class="t c n" style="left:925.25px;top:382.45px;width:200px">18</div>
<div class="a" style="left:1042.9px;top:380.4px;width:13.4px;height:19.6px;background:#f0f0f0"></div>
<div class="a" style="left:1061.3px;top:380.4px;width:44.4px;height:19.6px;background:#f0f0f0"></div>
<div class="t c n" style="left:983.65px;top:382.45px;width:200px">00:00</div>
<div class="a" style="left:1110.5px;top:380.4px;width:42px;height:19.6px;background:#f0f0f0"></div>
<div class="t c" style="left:1031.75px;top:382.45px;width:200px"><span style="letter-spacing:-0.55px">NON</span></div>
<div class="t c n" style="left:-51.45px;top:402.05px;width:200px">2190053</div>
<div class="t" style="left:102.2px;top:402.05px"><span style="letter-spacing:-0.55px">A</span><span style="letter-spacing:0.45px">aronson</span><span style="letter-spacing:0.45px"> </span><span style="letter-spacing:-0.55px">F</span><span style="letter-spacing:0.45px">urniture</span></div>
<div class="t" style="left:408px;top:402.05px"><span style="letter-spacing:0.45px">livre</span><span style="letter-spacing:0.45px"> </span><span style="letter-spacing:-0.55px">D</span><span style="letter-spacing:0.45px">akar</span><span style="letter-spacing:0.45px"> </span><span style="letter-spacing:0.6px">2020</span></div>
<div class="a" style="left:729.2px;top:400px;width:181.8px;height:19.6px;background:#ababab"></div>
<div class="t" style="left:733px;top:402.05px"><span style="letter-spacing:-0.55px">A</span><span style="letter-spacing:0.45px">rchives</span></div>
<div class="t c d" style="left:860.95px;top:402.05px;width:200px">07/05/2020</div>
<div class="t c n" style="left:925.25px;top:402.05px;width:200px">19</div>
<div class="t c n" style="left:983.65px;top:402.05px;width:200px">00:00</div>
<div class="t c" style="left:1031.75px;top:402.05px;width:200px"><span style="letter-spacing:-0.55px">OUI</span></div>
<div class="a" style="left:2px;top:419.6px;width:93px;height:19.6px;background:#f0f0f0"></div>
<div class="t c n" style="left:-51.45px;top:421.65px;width:200px">2190054</div>
<div class="a" style="left:100px;top:419.6px;width:301.5px;height:19.6px;background:#f0f0f0"></div>
<div class="t" style="left:102.2px;top:421.65px"><span style="letter-spacing:-0.55px">AWLR</span></div>
<div class="a" style="left:406px;top:419.6px;width:319.8px;height:19.6px;background:#f0f0f0"></div>
<div class="t" style="left:408px;top:421.65px"><span style="letter-spacing:0.45px">test</span><span style="letter-spacing:0.45px"> </span><span style="letter-spacing:0.45px">gestion</span><span style="letter-spacing:0.45px"> </span><span style="letter-spacing:0.45px">du</span><span style="letter-spacing:0.45px"> </span><span style="letter-spacing:0.45px">stock</span></div>
<div class="a" style="left:729.2px;top:419.6px;width:181.8px;height:19.6px;background:#ffe030"></div>
<div class="t" style="left:733px;top:421.65px"><span style="letter-spacing:-0.55px">N</span><span style="letter-spacing:0.45px">ouveau</span><span style="letter-spacing:0.45px"> </span><span style="letter-spacing:0.45px">job</span></div>
<div class="a" style="left:913.8px;top:419.6px;width:93.8px;height:19.6px;background:#f0f0f0"></div>
<div class="t c d" style="left:860.95px;top:421.65px;width:200px">23/10/2020</div>
<div class="a" style="left:1012.2px;top:419.6px;width:25.7px;height:19.6px;background:#f0f0f0"></div>
<div class="t c n" style="left:925.25px;top:421.65px;width:200px">43</div>
<div class="a" style="left:1042.9px;top:419.6px;width:13.4px;height:19.6px;background:#f0f0f0"></div>
<div class="a" style="left:1061.3px;top:419.6px;width:44.4px;height:19.6px;background:#f0f0f0"></div>
<div class="t c n" style="left:983.65px;top:421.65px;width:200px">00:00</div>
<div class="a" style="left:1110.5px;top:419.6px;width:42px;height:19.6px;background:#f0f0f0"></div>
<div class="t c" style="left:1031.75px;top:421.65px;width:200px"><span style="letter-spacing:-0.55px">NON</span></div>
<div class="t c n" style="left:-51.45px;top:441.25px;width:200px">2190055</div>
<div class="t" style="left:102.2px;top:441.25px"><span style="letter-spacing:-0.55px">A</span><span style="letter-spacing:0.45px">aronson</span><span style="letter-spacing:0.45px"> </span><span style="letter-spacing:-0.55px">F</span><span style="letter-spacing:0.45px">urniture</span></div>
<div class="t" style="left:408px;top:441.25px"><span style="letter-spacing:0.45px">test</span><span style="letter-spacing:0.45px"> </span><span style="letter-spacing:0.45px">livraison</span></div>
<div class="a" style="left:729.2px;top:439.2px;width:181.8px;height:19.6px;background:#ff2a00"></div>
<div class="t" style="left:733px;top:441.25px"><span style="letter-spacing:-0.55px">F</span><span style="letter-spacing:0.45px">ourni</span></div>
<div class="t c d" style="left:860.95px;top:441.25px;width:200px">02/11/2020</div>
<div class="t c n" style="left:925.25px;top:441.25px;width:200px">45</div>
<div class="t c n" style="left:983.65px;top:441.25px;width:200px">00:00</div>
<div class="t c" style="left:1031.75px;top:441.25px;width:200px"><span style="letter-spacing:-0.55px">NON</span></div>
<div class="a" style="left:2px;top:458.8px;width:93px;height:19.6px;background:#f0f0f0"></div>
<div class="t c n" style="left:-51.45px;top:460.85px;width:200px">2190056</div>
<div class="a" style="left:100px;top:458.8px;width:301.5px;height:19.6px;background:#f0f0f0"></div>
<div class="t" style="left:102.2px;top:460.85px"><span style="letter-spacing:-0.55px">A</span><span style="letter-spacing:0.45px">aronson</span><span style="letter-spacing:0.45px"> </span><span style="letter-spacing:-0.55px">F</span><span style="letter-spacing:0.45px">urniture</span></div>
<div class="a" style="left:406px;top:458.8px;width:319.8px;height:19.6px;background:#f0f0f0"></div>
<div class="t" style="left:408px;top:460.85px"><span style="letter-spacing:0.45px">test</span><span style="letter-spacing:0.45px"> </span><span style="letter-spacing:0.45px">livraison</span><span style="letter-spacing:0.45px"> </span><span style="letter-spacing:0.6px">2</span></div>
<div class="a" style="left:729.2px;top:458.8px;width:181.8px;height:19.6px;background:#ff2a00"></div>
<div class="t" style="left:733px;top:460.85px"><span style="letter-spacing:-0.55px">F</span><span style="letter-spacing:0.45px">ourni</span></div>
<div class="a" style="left:913.8px;top:458.8px;width:93.8px;height:19.6px;background:#f0f0f0"></div>
<div class="t c d" style="left:860.95px;top:460.85px;width:200px">02/11/2020</div>
<div class="a" style="left:1012.2px;top:458.8px;width:25.7px;height:19.6px;background:#f0f0f0"></div>
<div class="t c n" style="left:925.25px;top:460.85px;width:200px">45</div>
<div class="a" style="left:1042.9px;top:458.8px;width:13.4px;height:19.6px;background:#f0f0f0"></div>
<div class="a" style="left:1061.3px;top:458.8px;width:44.4px;height:19.6px;background:#f0f0f0"></div>
<div class="t c n" style="left:983.65px;top:460.85px;width:200px">00:00</div>
<div class="a" style="left:1110.5px;top:458.8px;width:42px;height:19.6px;background:#f0f0f0"></div>
<div class="t c" style="left:1031.75px;top:460.85px;width:200px"><span style="letter-spacing:-0.55px">NON</span></div>
<div class="t c n" style="left:-51.45px;top:480.45px;width:200px">2190057</div>
<div class="t" style="left:102.2px;top:480.45px"><span style="letter-spacing:-0.55px">A</span><span style="letter-spacing:0.45px">aronson</span><span style="letter-spacing:0.45px"> </span><span style="letter-spacing:-0.55px">F</span><span style="letter-spacing:0.45px">urniture</span></div>
<div class="t" style="left:408px;top:480.45px"><span style="letter-spacing:0.45px">test</span><span style="letter-spacing:0.45px"> </span><span style="letter-spacing:0.45px">livraison</span><span style="letter-spacing:0.45px"> </span><span style="letter-spacing:0.6px">3</span></div>
<div class="a" style="left:729.2px;top:478.4px;width:181.8px;height:19.6px;background:#ff2a00"></div>
<div class="t" style="left:733px;top:480.45px"><span style="letter-spacing:-0.55px">F</span><span style="letter-spacing:0.45px">ourni</span></div>
<div class="t c d" style="left:860.95px;top:480.45px;width:200px">02/11/2020</div>
<div class="t c n" style="left:925.25px;top:480.45px;width:200px">45</div>
<div class="t c n" style="left:983.65px;top:480.45px;width:200px">00:00</div>
<div class="t c" style="left:1031.75px;top:480.45px;width:200px"><span style="letter-spacing:-0.55px">NON</span></div>
<div class="a" style="left:2px;top:498px;width:93px;height:19.6px;background:#f0f0f0"></div>
<div class="t c n" style="left:-51.45px;top:500.05px;width:200px">2190058</div>
<div class="a" style="left:100px;top:498px;width:301.5px;height:19.6px;background:#f0f0f0"></div>
<div class="t" style="left:102.2px;top:500.05px"><span style="letter-spacing:-0.55px">A</span><span style="letter-spacing:0.45px">aronson</span><span style="letter-spacing:0.45px"> </span><span style="letter-spacing:-0.55px">F</span><span style="letter-spacing:0.45px">urniture</span></div>
<div class="a" style="left:406px;top:498px;width:319.8px;height:19.6px;background:#f0f0f0"></div>
<div class="t" style="left:408px;top:500.05px"><span style="letter-spacing:0.45px">test</span><span style="letter-spacing:0.45px"> </span><span style="letter-spacing:0.45px">livraison</span><span style="letter-spacing:0.45px"> </span><span style="letter-spacing:0.6px">4</span></div>
<div class="a" style="left:729.2px;top:498px;width:181.8px;height:19.6px;background:#ffe030"></div>
<div class="t" style="left:733px;top:500.05px"><span style="letter-spacing:-0.55px">N</span><span style="letter-spacing:0.45px">ouveau</span><span style="letter-spacing:0.45px"> </span><span style="letter-spacing:0.45px">job</span></div>
<div class="a" style="left:913.8px;top:498px;width:93.8px;height:19.6px;background:#f0f0f0"></div>
<div class="t c d" style="left:860.95px;top:500.05px;width:200px">02/11/2020</div>
<div class="a" style="left:1012.2px;top:498px;width:25.7px;height:19.6px;background:#f0f0f0"></div>
<div class="t c n" style="left:925.25px;top:500.05px;width:200px">45</div>
<div class="a" style="left:1042.9px;top:498px;width:13.4px;height:19.6px;background:#f0f0f0"></div>
<div class="a" style="left:1061.3px;top:498px;width:44.4px;height:19.6px;background:#f0f0f0"></div>
<div class="t c n" style="left:983.65px;top:500.05px;width:200px">00:00</div>
<div class="a" style="left:1110.5px;top:498px;width:42px;height:19.6px;background:#f0f0f0"></div>
<div class="t c" style="left:1031.75px;top:500.05px;width:200px"><span style="letter-spacing:-0.55px">NON</span></div>
<div class="t c n" style="left:-51.45px;top:519.65px;width:200px">2190059</div>
<div class="t" style="left:102.2px;top:519.65px"><span style="letter-spacing:-0.55px">AWLR</span></div>
<div class="t" style="left:408px;top:519.65px"><span style="letter-spacing:0.45px">test</span><span style="letter-spacing:0.45px"> </span><span style="letter-spacing:0.45px">luik</span><span style="letter-spacing:0.45px"> </span><span style="letter-spacing:0.45px">hoofdomschrijving</span></div>
<div class="a" style="left:729.2px;top:517.6px;width:181.8px;height:19.6px;background:#ffe030"></div>
<div class="t" style="left:733px;top:519.65px"><span style="letter-spacing:-0.55px">N</span><span style="letter-spacing:0.45px">ouveau</span><span style="letter-spacing:0.45px"> </span><span style="letter-spacing:0.45px">job</span></div>
<div class="t c d" style="left:860.95px;top:519.65px;width:200px">18/04/2022</div>
<div class="t c n" style="left:925.25px;top:519.65px;width:200px">16</div>
<div class="t c n" style="left:983.65px;top:519.65px;width:200px">00:00</div>
<div class="t c" style="left:1031.75px;top:519.65px;width:200px"><span style="letter-spacing:-0.55px">NON</span></div>
<div class="a" style="left:2px;top:537.2px;width:93px;height:19.6px;background:#f0f0f0"></div>
<div class="t c n" style="left:-51.45px;top:539.25px;width:200px">2190062</div>
<div class="a" style="left:100px;top:537.2px;width:301.5px;height:19.6px;background:#f0f0f0"></div>
<div class="t" style="left:102.2px;top:539.25px"><span style="letter-spacing:-0.55px">C</span><span style="letter-spacing:0.45px">raft</span></div>
<div class="a" style="left:406px;top:537.2px;width:319.8px;height:19.6px;background:#f0f0f0"></div>
<div class="t" style="left:408px;top:539.25px"><span style="letter-spacing:-0.55px">F</span><span style="letter-spacing:0.45px">lyer</span><span style="letter-spacing:0.45px"> </span><span style="letter-spacing:-0.55px">A</span><span style="letter-spacing:0.6px">4</span></div>
<div class="a" style="left:729.2px;top:537.2px;width:181.8px;height:19.6px;background:#ffe030"></div>
<div class="t" style="left:733px;top:539.25px"><span style="letter-spacing:-0.55px">N</span><span style="letter-spacing:0.45px">ouveau</span><span style="letter-spacing:0.45px"> </span><span style="letter-spacing:0.45px">job</span></div>
<div class="a" style="left:913.8px;top:537.2px;width:93.8px;height:19.6px;background:#f0f0f0"></div>
<div class="t c d" style="left:860.95px;top:539.25px;width:200px">31/08/2022</div>
<div class="a" style="left:1012.2px;top:537.2px;width:25.7px;height:19.6px;background:#f0f0f0"></div>
<div class="t c n" style="left:925.25px;top:539.25px;width:200px">35</div>
<div class="a" style="left:1042.9px;top:537.2px;width:13.4px;height:19.6px;background:#f0f0f0"></div>
<div class="a" style="left:1061.3px;top:537.2px;width:44.4px;height:19.6px;background:#f0f0f0"></div>
<div class="t c n" style="left:983.65px;top:539.25px;width:200px">00:00</div>
<div class="a" style="left:1110.5px;top:537.2px;width:42px;height:19.6px;background:#f0f0f0"></div>
<div class="t c" style="left:1031.75px;top:539.25px;width:200px"><span style="letter-spacing:-0.55px">NON</span></div>
</div>
<div class="a" style="left:112px;top:176px;width:1px;height:556.8px;background:#000"></div>
<div class="a" style="left:113px;top:176px;width:1px;height:556.8px;background:rgba(0,0,0,.55)"></div>
<div class="a" style="left:418px;top:176px;width:1px;height:556.8px;background:#000"></div>
<div class="a" style="left:417px;top:176px;width:1px;height:556.8px;background:rgba(0,0,0,.55)"></div>
<div class="a" style="left:743px;top:176px;width:1px;height:556.8px;background:#000"></div>
<div class="a" style="left:742px;top:176px;width:1px;height:556.8px;background:rgba(0,0,0,.55)"></div>
<div class="a" style="left:926px;top:176px;width:1px;height:556.8px;background:#000"></div>
<div class="a" style="left:927px;top:176px;width:1px;height:556.8px;background:rgba(0,0,0,.55)"></div>
<div class="a" style="left:1024px;top:176px;width:1px;height:556.8px;background:#000"></div>
<div class="a" style="left:1025px;top:176px;width:1px;height:556.8px;background:rgba(0,0,0,.55)"></div>
<div class="a" style="left:1055px;top:176px;width:1px;height:556.8px;background:#000"></div>
<div class="a" style="left:1054px;top:176px;width:1px;height:556.8px;background:rgba(0,0,0,.55)"></div>
<div class="a" style="left:1073px;top:176px;width:1px;height:556.8px;background:#000"></div>
<div class="a" style="left:1074px;top:176px;width:1px;height:556.8px;background:rgba(0,0,0,.55)"></div>
<div class="a" style="left:1123px;top:176px;width:1px;height:556.8px;background:#000"></div>
<div class="a" style="left:1122px;top:176px;width:1px;height:556.8px;background:rgba(0,0,0,.55)"></div>
<div class="a" style="left:15px;top:152px;width:1171px;height:24.5px;background:#fff;border-bottom:1px solid #e3e3e3"></div>
<div class="hs" style="left:112.2px"></div>
<div class="hs" style="left:417.9px"></div>
<div class="hs" style="left:742.7px"></div>
<div class="hs" style="left:926px"></div>
<div class="hs" style="left:1024.2px"></div>
<div class="hs" style="left:1054.7px"></div>
<div class="hs" style="left:1073.2px"></div>
<div class="hs" style="left:1122.6px"></div>
<div class="hs" style="left:1166.3px"></div>
<div class="t b" style="left:18.6px;top:156.05px;">N°job.</div>
<div class="t b" style="left:117.2px;top:156.05px;">Nom client</div>
<div class="t b" style="left:423.4px;top:156.05px;">Description</div>
<div class="t b" style="left:748px;top:156.05px;">Statut job</div>
<div class="t b" style="left:950.7px;top:156.05px;">Livrer</div>
<svg class="a" style="left:1013px;top:160px" width="11" height="8" viewBox="0 0 11 8"><path d="M1.6 6.2 L5.5 2.3 L9.4 6.2" fill="none" stroke="#333" stroke-width="1.9"/></svg>
<div class="a" style="left:1028.3px;top:152px;width:26px;height:23px;overflow:hidden"><div class="t b" style="left:-6.5px;top:4.05px">Sem</div></div>
<div class="t b" style="left:1060.3px;top:156.05px;">U</div>
<div class="a" style="left:1077px;top:152px;width:43.5px;height:23px;overflow:hidden"><div class="t b" style="left:1px;top:4.05px">Temps</div></div>
<div class="t b" style="left:1133.4px;top:156.05px;">fact.</div>
<div class="a" style="left:1168px;top:176px;width:18px;height:556.8px;background:#fafafa;border-left:1px solid #efefef"></div>
<div class="a" style="left:1172.4px;top:618px;width:9.6px;height:114px;background:#c1c1c1;border-radius:5px"></div>
<div class="a" style="left:744px;top:732.8px;width:424px;height:18.2px;background:#fafafa"></div>
<div class="a" style="left:744px;top:737.5px;width:93px;height:9.6px;background:#c1c1c1;border-radius:5px"></div>
</div></body></html>
